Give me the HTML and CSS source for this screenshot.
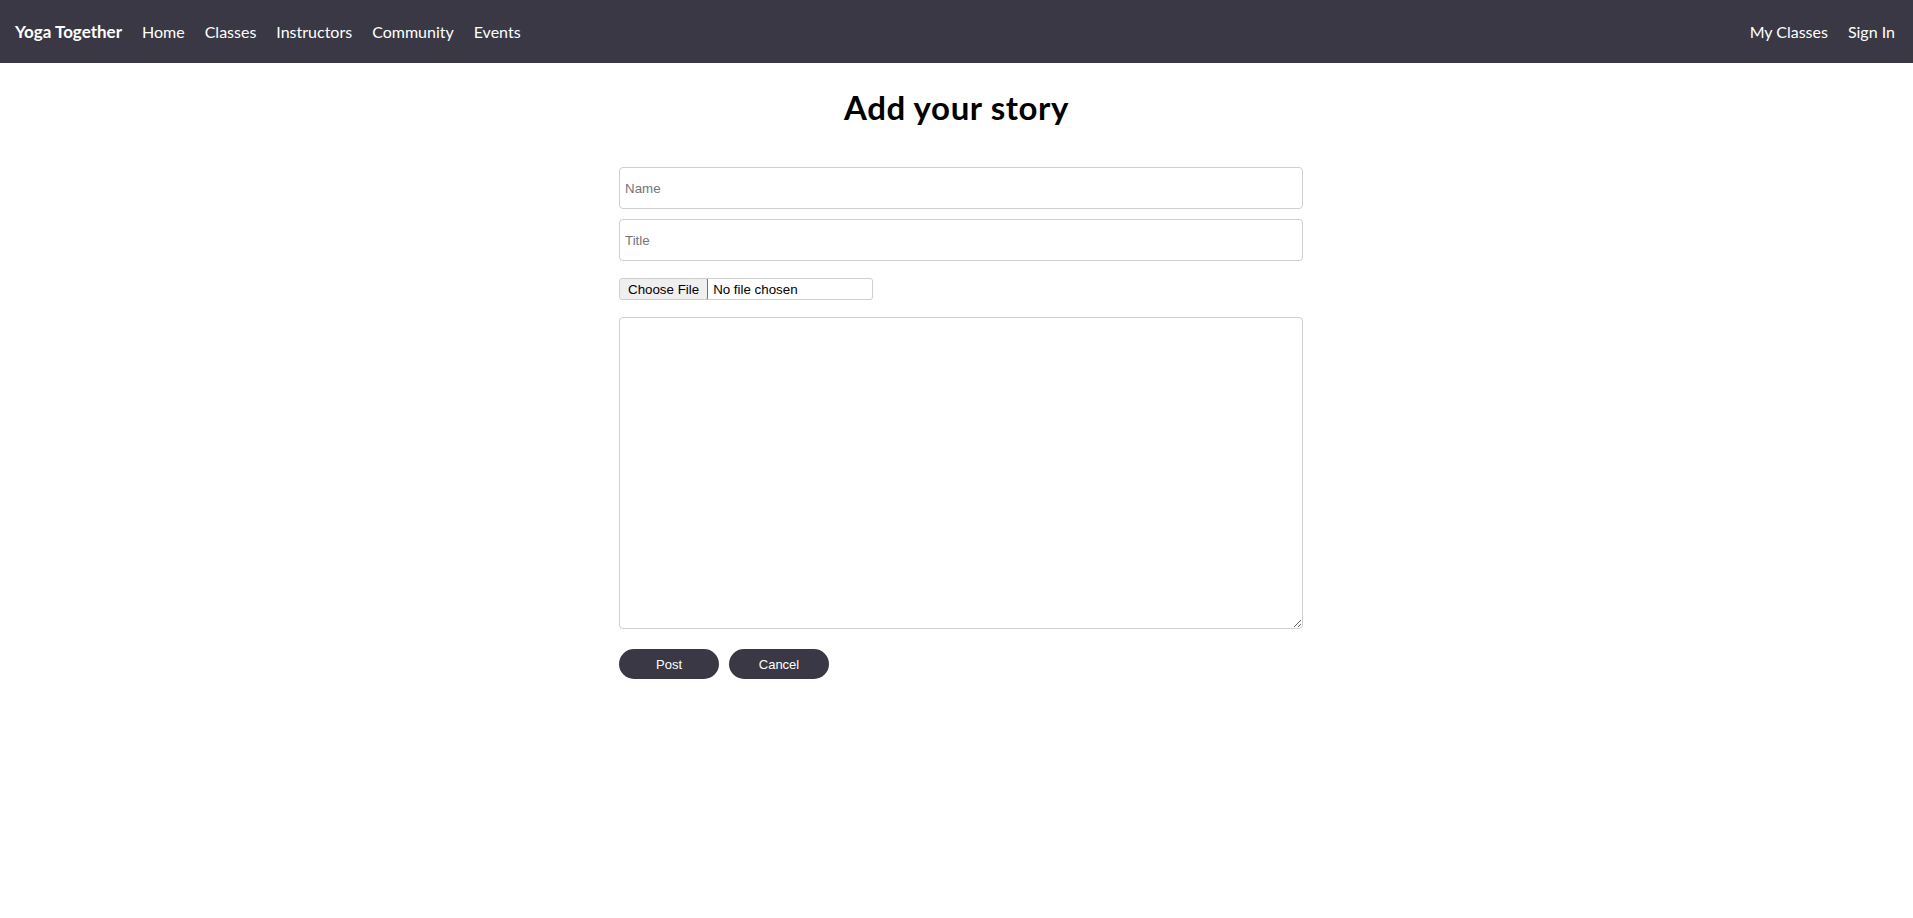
FILE: index.html
```html
<!DOCTYPE html>
<html lang="en">
<head>
<meta charset="utf-8">
<title>Yoga Together - Add your story</title>
<link rel="stylesheet" href="styles.css">
</head>
<body>
<header class="navbar">
  <nav class="nav-left">
    <a class="brand" href="#">Yoga Together</a>
    <a class="nav-link" href="#">Home</a>
    <a class="nav-link" href="#">Classes</a>
    <a class="nav-link" href="#">Instructors</a>
    <a class="nav-link" href="#">Community</a>
    <a class="nav-link" href="#">Events</a>
  </nav>
  <nav class="nav-right">
    <a class="nav-link" href="#">My Classes</a>
    <a class="nav-link" href="#">Sign In</a>
  </nav>
</header>
<main class="page">
  <h1 class="page-title">Add your story</h1>
  <form class="story-form">
    <input class="text-input" type="text" placeholder="Name">
    <input class="text-input title-input" type="text" placeholder="Title">
    <input class="file-input" type="file">
    <textarea class="story-text"></textarea>
    <div class="actions">
      <button class="pill-btn" type="button">Post</button>
      <button class="pill-btn" type="button">Cancel</button>
    </div>
  </form>
</main>
</body>
</html>
```

FILE: styles.css
```css
html, body {
  margin: 0;
  padding: 0;
  background: #ffffff;
}

body {
  font-family: "Segoe UI", Lato, "Open Sans", sans-serif;
  color: #000;
}

.navbar {
  height: 63px;
  background: #3a3845;
  display: flex;
  align-items: center;
  justify-content: space-between;
  padding: 0 18px 0 15px;
  box-sizing: border-box;
}

.nav-left,
.nav-right {
  display: flex;
  align-items: center;
  gap: 20px;
}

.navbar a {
  color: #ffffff;
  text-decoration: none;
  font-size: 16px;
  line-height: 22px;
}

.navbar .brand {
  font-weight: 700;
  font-size: 17px;
}

.page {
  display: flex;
  flex-direction: column;
  align-items: center;
}

.page-title {
  margin: 25px 0 0;
  font-size: 33px;
  letter-spacing: 0.6px;
  line-height: 38px;
  font-weight: 700;
  text-align: center;
}

.story-form {
  width: 675px;
  margin-top: 41px;
  display: flex;
  flex-direction: column;
  align-items: flex-start;
  font-family: "Liberation Sans", Arial, sans-serif;
}

.text-input {
  box-sizing: border-box;
  width: calc(100% + 9px);
  height: 42px;
  margin: 0;
  padding: 0 5px;
  border: 1px solid #cfcfcf;
  border-radius: 4px;
  font-family: "Liberation Sans", Arial, sans-serif;
  font-size: 13.33px;
  color: #000;
  background: #fff;
}

.text-input::placeholder {
  color: #757575;
}

.title-input {
  margin-top: 10px;
}

.file-input {
  box-sizing: border-box;
  width: 254px;
  height: 22px;
  margin: 17px 0 0;
  padding: 0;
  border: 1px solid #cfcfcf;
  border-radius: 3px;
  font-family: "Liberation Sans", Arial, sans-serif;
  font-size: 13.33px;
  color: #000;
  background: #fff;
  overflow: hidden;
}

.file-input::file-selector-button {
  height: 22px;
  margin: -1px 5px 0 -1px;
  padding: 0 8px;
  border: 1px solid #767676;
  border-radius: 2px;
  background: #efefef;
  font-family: "Liberation Sans", Arial, sans-serif;
  font-size: 13.33px;
  color: #000;
}

.story-text {
  box-sizing: border-box;
  width: calc(100% + 9px);
  height: 312px;
  margin: 17px 0 0;
  padding: 5px;
  border: 1px solid #cfcfcf;
  border-radius: 4px;
  font-family: "Liberation Sans", Arial, sans-serif;
  font-size: 13.33px;
  resize: both;
}

.actions {
  display: flex;
  gap: 10px;
  margin-top: 20px;
}

.pill-btn {
  width: 100px;
  height: 30px;
  border: none;
  border-radius: 15px;
  background: #3a3845;
  color: #ffffff;
  font-family: "Liberation Sans", Arial, sans-serif;
  font-size: 13px;
  cursor: pointer;
}
```
